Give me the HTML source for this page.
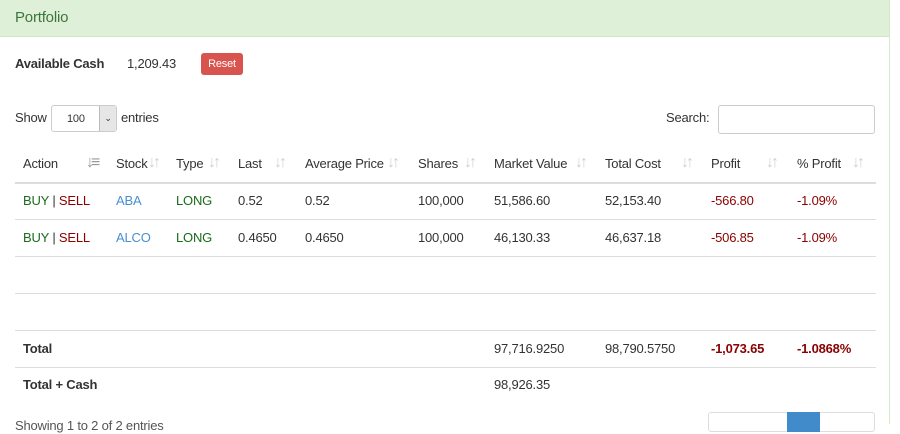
<!DOCTYPE html>
<html><head><style>
body{margin:0;width:900px;height:424px;overflow:hidden;background:#fff;font-family:"Liberation Sans",sans-serif;font-size:13px;color:#333;position:relative;letter-spacing:-0.2px}
.a{position:absolute;white-space:nowrap;line-height:16px}
.hl{position:absolute;left:15px;width:861px;height:1px;background:#ddd}
.s{color:#d0d0d0;font-size:16px;letter-spacing:-3px;font-weight:bold;top:155px!important}
.g{color:#1a6b1a}.r{color:#8b0000}.b{color:#4a8fcf}
</style></head><body>
<div style="position:absolute;left:0;top:0;width:889px;height:36px;background:#dff0d8;border-bottom:1px solid #d0e6c6"></div>
<div style="position:absolute;left:889px;top:0;width:1px;height:424px;background:#d6e9c6"></div>
<div class="a" style="left:15px;top:10px;font-size:15px;color:#3c763d">Portfolio</div>
<div class="a" style="left:15px;top:56px;font-weight:bold">Available Cash</div>
<div class="a" style="left:127px;top:56px">1,209.43</div>
<div class="a" style="left:201px;top:53px;width:42px;height:22px;background:#d9534f;border-radius:3px;color:#fff;font-size:11px;line-height:22px;text-align:center">Reset</div>
<div class="a" style="left:15px;top:110px">Show</div>
<div class="a" style="left:51px;top:105px;width:66px;height:27px;border:1px solid #ccc;border-radius:3px;box-sizing:border-box;font-size:11px;line-height:27px;padding-left:15px">100<div style="position:absolute;right:0;top:0;width:16px;height:25px;background:#e6e6e6;border-left:1px solid #bbb;text-align:center;font-size:9px;line-height:25px">&#8964;</div></div>
<div class="a" style="left:121px;top:110px">entries</div>
<div class="a" style="left:666px;top:110px">Search:</div>
<div class="a" style="left:718px;top:105px;width:157px;height:29px;border:1px solid #ccc;border-radius:3px;box-sizing:border-box"></div>
<div class="a" style="left:23px;top:156px">Action</div><div class="a s" style="left:86px;color:#999">↓≡</div>
<div class="a" style="left:116px;top:156px">Stock</div><div class="a s" style="left:148px">↓↑</div>
<div class="a" style="left:176px;top:156px">Type</div><div class="a s" style="left:208px">↓↑</div>
<div class="a" style="left:238px;top:156px">Last</div><div class="a s" style="left:274px">↓↑</div>
<div class="a" style="left:305px;top:156px">Average Price</div><div class="a s" style="left:387px">↓↑</div>
<div class="a" style="left:418px;top:156px">Shares</div><div class="a s" style="left:464px">↓↑</div>
<div class="a" style="left:494px;top:156px">Market Value</div><div class="a s" style="left:575px">↓↑</div>
<div class="a" style="left:605px;top:156px">Total Cost</div><div class="a s" style="left:681px">↓↑</div>
<div class="a" style="left:711px;top:156px">Profit</div><div class="a s" style="left:766px">↓↑</div>
<div class="a" style="left:797px;top:156px">% Profit</div><div class="a s" style="left:852px">↓↑</div>
<div class="hl" style="top:182px;height:2px"></div>
<div class="a" style="left:23px;top:193px"><span class="g">BUY</span> | <span class="r">SELL</span></div>
<div class="a b" style="left:116px;top:193px">ABA</div><div class="a g" style="left:176px;top:193px">LONG</div>
<div class="a" style="left:238px;top:193px">0.52</div><div class="a" style="left:305px;top:193px">0.52</div>
<div class="a" style="left:418px;top:193px">100,000</div><div class="a" style="left:494px;top:193px">51,586.60</div>
<div class="a" style="left:605px;top:193px">52,153.40</div><div class="a r" style="left:711px;top:193px">-566.80</div><div class="a r" style="left:797px;top:193px">-1.09%</div>
<div class="hl" style="top:219px"></div>
<div class="a" style="left:23px;top:230px"><span class="g">BUY</span> | <span class="r">SELL</span></div>
<div class="a b" style="left:116px;top:230px">ALCO</div><div class="a g" style="left:176px;top:230px">LONG</div>
<div class="a" style="left:238px;top:230px">0.4650</div><div class="a" style="left:305px;top:230px">0.4650</div>
<div class="a" style="left:418px;top:230px">100,000</div><div class="a" style="left:494px;top:230px">46,130.33</div>
<div class="a" style="left:605px;top:230px">46,637.18</div><div class="a r" style="left:711px;top:230px">-506.85</div><div class="a r" style="left:797px;top:230px">-1.09%</div>
<div class="hl" style="top:256px"></div>
<div class="hl" style="top:293px"></div>
<div class="hl" style="top:330px"></div>
<div class="a" style="left:23px;top:341px;font-weight:bold">Total</div>
<div class="a" style="left:494px;top:341px">97,716.9250</div><div class="a" style="left:605px;top:341px">98,790.5750</div>
<div class="a r" style="left:711px;top:341px;font-weight:bold">-1,073.65</div><div class="a r" style="left:797px;top:341px;font-weight:bold">-1.0868%</div>
<div class="hl" style="top:367px"></div>
<div class="a" style="left:23px;top:377px;font-weight:bold">Total + Cash</div>
<div class="a" style="left:494px;top:377px">98,926.35</div>
<div class="a" style="left:15px;top:418px;color:#555">Showing 1 to 2 of 2 entries</div>
<div class="a" style="left:708px;top:412px;width:167px;height:20px;border:1px solid #ddd;border-radius:3px;box-sizing:border-box"></div>
<div class="a" style="left:787px;top:412px;width:33px;height:20px;background:#428bca"></div>
</body></html>
